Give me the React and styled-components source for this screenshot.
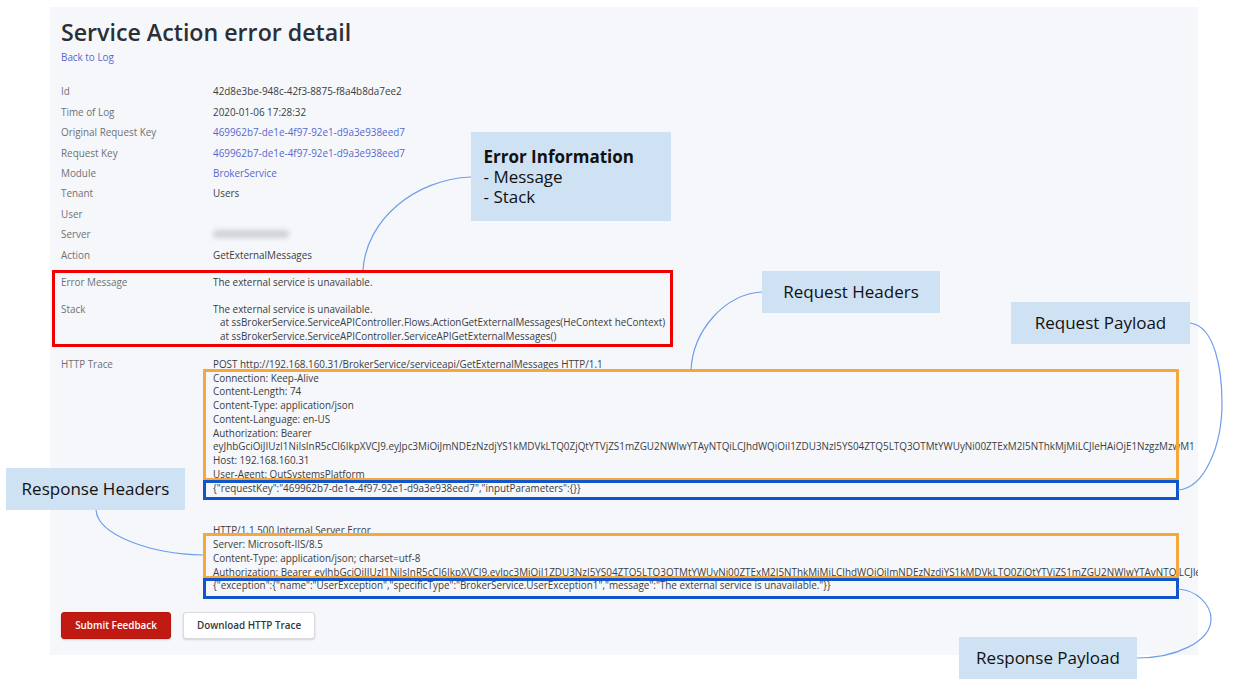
import styled, { createGlobalStyle } from "styled-components";

const GlobalStyle = createGlobalStyle`
  html, body {
    margin: 0;
    padding: 0;
    background: #ffffff;
    font-family: "Open Sans", "Liberation Sans", sans-serif;
  }
`;

const Page = styled.div`
  position: relative;
  width: 1235px;
  height: 691px;
  padding: 7px 37px 36px 50px;
  box-sizing: border-box;
  overflow: hidden;
`;

const Panel = styled.main`
  width: 100%;
  height: 100%;
  box-sizing: border-box;
  padding: 9px 0 0 11px;
  background: #f6f7fa;
  overflow: hidden;
  display: flex;
  flex-direction: column;
`;

const Title = styled.h1`
  margin: 0;
  font-size: 23.2px;
  line-height: 32px;
  font-weight: 600;
  color: #2b2f36;
`;

const Link = styled.a`
  color: #5668cf;
  text-decoration: none;
`;

const BackLink = styled(Link)`
  font-size: 9.9px;
  line-height: 14px;
  margin: 2px 0 17px;
`;

const Details = styled.div`
  display: grid;
  grid-template-columns: 152px 1fr;
  grid-auto-rows: 20.45px;
  align-items: center;
  font-size: 9.9px;
  line-height: 14px;
`;

const Label = styled.div`
  color: #6d7178;
`;

const Value = styled.div`
  color: #3a3d42;
  white-space: nowrap;
`;

const Blurred = styled.span`
  display: inline-block;
  width: 76px;
  height: 8px;
  background: #cfd1d6;
  border-radius: 4px;
  filter: blur(2.5px);
`;

const ErrorRows = styled.div`
  display: grid;
  grid-template-columns: 152px 1fr;
  row-gap: 13px;
  margin-top: 11px;
  font-size: 9.9px;
  line-height: 13.7px;
`;

const StackLine = styled.div`
  white-space: nowrap;
  padding-left: ${(p) => (p.$indent ? "7px" : "0")};
`;

const TraceRow = styled.div`
  display: grid;
  grid-template-columns: 152px 1fr;
  margin-top: 14px;
  font-size: 9.9px;
  line-height: 13.75px;
  min-width: 0;
`;

const TraceText = styled.div`
  color: #3a3d42;
  white-space: nowrap;
  min-width: 0;
`;

const TraceGap = styled.div`
  height: 29px;
`;

const Actions = styled.div`
  display: flex;
  gap: 12px;
  margin-top: 18.5px;
`;

const Button = styled.button`
  height: 27px;
  padding: 0;
  width: ${(p) => p.$width}px;
  border-radius: 3px;
  font-family: inherit;
  font-size: 9.9px;
  font-weight: 600;
  border: 1px solid ${(p) => (p.$primary ? "#b5170f" : "#d8dadf")};
  background: ${(p) => (p.$primary ? "#c01a12" : "#ffffff")};
  color: ${(p) => (p.$primary ? "#ffffff" : "#34373c")};
  box-shadow: 0 1px 2px rgba(0, 0, 0, 0.15);
`;

const Highlight = styled.div`
  position: absolute;
  left: ${(p) => p.$x}px;
  top: ${(p) => p.$y}px;
  width: ${(p) => p.$w}px;
  height: ${(p) => p.$h}px;
  box-sizing: border-box;
  border: 3px solid ${(p) => p.$color};
`;

const Callout = styled.div`
  position: absolute;
  left: ${(p) => p.$x}px;
  top: ${(p) => p.$y}px;
  width: ${(p) => p.$w}px;
  height: ${(p) => p.$h}px;
  box-sizing: border-box;
  background: #cfe2f3;
  color: #111111;
  font-size: 17px;
  line-height: 20px;
  display: flex;
  align-items: center;
  justify-content: center;
`;

const InfoCallout = styled(Callout)`
  display: block;
  padding: 14px 12.5px;
  strong {
    display: block;
    font-weight: 700;
    line-height: 21px;
  }
`;

const Connectors = styled.svg`
  position: absolute;
  left: 0;
  top: 0;
  pointer-events: none;
`;

const TOKEN_A =
  "eyJhbGciOiJIUzI1NiIsInR5cCI6IkpXVCJ9.eyJpc3MiOiJmNDEzNzdjYS1kMDVkLTQ0ZjQtYTVjZS1mZGU2NWIwYTAyNTQiLCJhdWQiOiI1ZDU3NzI5YS04ZTQ5LTQ3OTMtYWUyNi00ZTExM2I5NThkMjMiLCJleHAiOjE1NzgzMzwM1";
const TOKEN_B =
  "eyJhbGciOiJIUzI1NiIsInR5cCI6IkpXVCJ9.eyJpc3MiOiI1ZDU3NzI5YS04ZTQ5LTQ3OTMtYWUyNi00ZTExM2I5NThkMjMiLCJhdWQiOiJmNDEzNzdjYS1kMDVkLTQ0ZjQtYTVjZS1mZGU2NWIwYTAyNTQiLCJleHAi";

const requestLines = [
  "POST http://192.168.160.31/BrokerService/serviceapi/GetExternalMessages HTTP/1.1",
  "Connection: Keep-Alive",
  "Content-Length: 74",
  "Content-Type: application/json",
  "Content-Language: en-US",
  "Authorization: Bearer",
  TOKEN_A,
  "Host: 192.168.160.31",
  "User-Agent: OutSystemsPlatform",
  '{"requestKey":"469962b7-de1e-4f97-92e1-d9a3e938eed7","inputParameters":{}}',
];

const responseLines = [
  "HTTP/1.1 500 Internal Server Error",
  "Server: Microsoft-IIS/8.5",
  "Content-Type: application/json; charset=utf-8",
  "Authorization: Bearer " + TOKEN_B,
  '{"exception":{"name":"UserException","specificType":"BrokerService.UserException1","message":"The external service is unavailable."}}',
];

const KEY = "469962b7-de1e-4f97-92e1-d9a3e938eed7";

export default function App() {
  return (
    <Page>
      <GlobalStyle />
      <Panel>
        <Title>Service Action error detail</Title>
        <BackLink href="#">Back to Log</BackLink>
        <Details>
          <Label>Id</Label>
          <Value>42d8e3be-948c-42f3-8875-f8a4b8da7ee2</Value>
          <Label>Time of Log</Label>
          <Value>2020-01-06 17:28:32</Value>
          <Label>Original Request Key</Label>
          <Value><Link href="#">{KEY}</Link></Value>
          <Label>Request Key</Label>
          <Value><Link href="#">{KEY}</Link></Value>
          <Label>Module</Label>
          <Value><Link href="#">BrokerService</Link></Value>
          <Label>Tenant</Label>
          <Value>Users</Value>
          <Label>User</Label>
          <Value />
          <Label>Server</Label>
          <Value><Blurred /></Value>
          <Label>Action</Label>
          <Value>GetExternalMessages</Value>
        </Details>
        <ErrorRows>
          <Label>Error Message</Label>
          <Value>The external service is unavailable.</Value>
          <Label>Stack</Label>
          <Value>
            <StackLine>The external service is unavailable.</StackLine>
            <StackLine $indent>at ssBrokerService.ServiceAPIController.Flows.ActionGetExternalMessages(HeContext heContext)</StackLine>
            <StackLine $indent>at ssBrokerService.ServiceAPIController.ServiceAPIGetExternalMessages()</StackLine>
          </Value>
        </ErrorRows>
        <TraceRow>
          <Label>HTTP Trace</Label>
          <TraceText>
            {requestLines.map((line) => (
              <div key={line}>{line}</div>
            ))}
            <TraceGap />
            {responseLines.map((line) => (
              <div key={line}>{line}</div>
            ))}
          </TraceText>
        </TraceRow>
        <Actions>
          <Button $primary $width={110}>Submit Feedback</Button>
          <Button $width={132}>Download HTTP Trace</Button>
        </Actions>
      </Panel>

      <Highlight $x={52} $y={270} $w={621} $h={77} $color="#f00000" />
      <Highlight $x={203} $y={369} $w={976} $h={112} $color="#f6a83c" />
      <Highlight $x={203} $y={480} $w={976} $h={20} $color="#1155cc" />
      <Highlight $x={203} $y={533} $w={976} $h={46} $color="#f6a83c" />
      <Highlight $x={203} $y={578} $w={976} $h={21} $color="#1155cc" />

      <Connectors width="1235" height="691" fill="none" stroke="#6d9eeb" strokeWidth="1.2">
        <path d="M471 177C415 179 366 220 363 270" />
        <path d="M762 292C725 294 693 330 691 370" />
        <path d="M1190 323C1215 326 1222 370 1222 403C1222 445 1205 488 1178 490" />
        <path d="M96 510C98 535 150 554 203 555" />
        <path d="M1178 589C1197 590 1211 605 1211 619C1211 642 1175 658 1137 658" />
      </Connectors>

      <InfoCallout $x={471} $y={132} $w={200} $h={89}>
        <strong>Error Information</strong>
        - Message
        <br />
        - Stack
      </InfoCallout>
      <Callout $x={762} $y={271} $w={178} $h={42}>Request Headers</Callout>
      <Callout $x={1011} $y={302} $w={179} $h={42}>Request Payload</Callout>
      <Callout $x={6} $y={468} $w={179} $h={42}>Response Headers</Callout>
      <Callout $x={959} $y={637} $w={178} $h={42}>Response Payload</Callout>
    </Page>
  );
}
